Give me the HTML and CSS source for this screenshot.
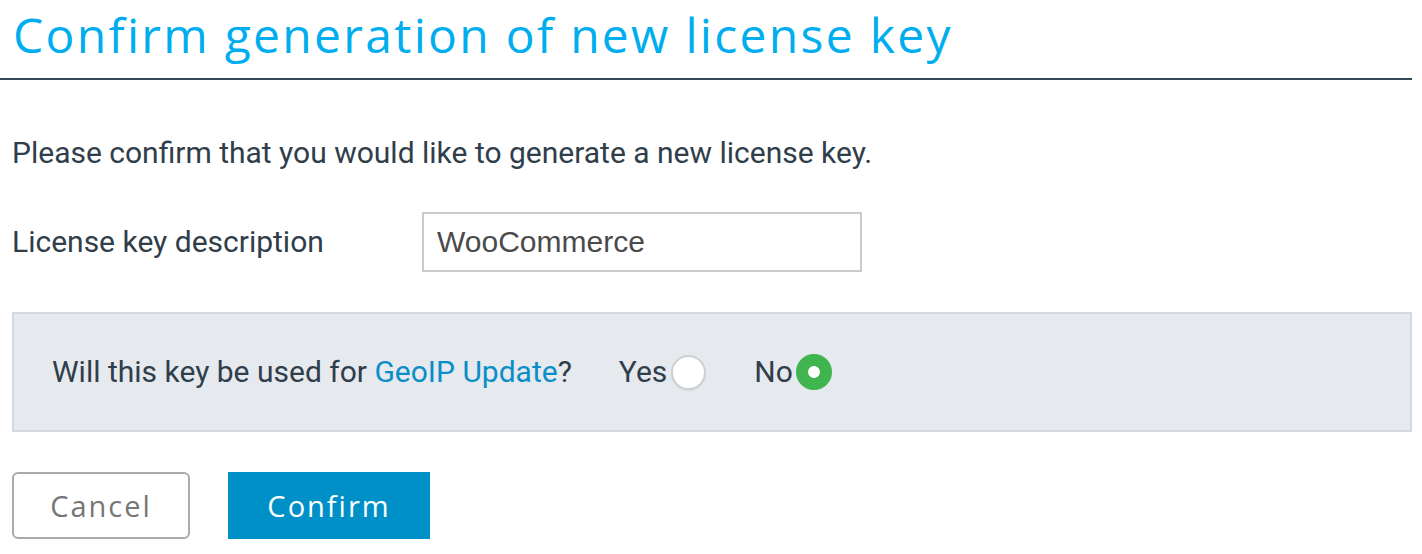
FILE: index.html
```html
<!DOCTYPE html>
<html lang="en">
<head>
<meta charset="utf-8">
<title>Confirm generation of new license key</title>
<link rel="stylesheet" href="styles.css">
</head>
<body>
<div class="page">
  <h1 class="title">Confirm generation of new license key</h1>
  <p class="intro">Please confirm that you would like to generate a new license key.</p>
  <div class="field-row">
    <label class="field-label" for="desc">License key description</label>
    <input class="field-input" id="desc" type="text" value="WooCommerce">
  </div>
  <div class="geoip-panel">
    <span class="question">Will this key be used for <a class="link" href="#">GeoIP Update</a>?</span>
    <label class="choice">Yes<span class="radio"></span></label>
    <label class="choice">No<span class="radio checked"></span></label>
  </div>
  <div class="actions">
    <button class="btn btn-cancel" type="button">Cancel</button>
    <button class="btn btn-confirm" type="button">Confirm</button>
  </div>
</div>
</body>
</html>
```

FILE: styles.css
```css
html, body {
  margin: 0;
  padding: 0;
  background: #ffffff;
}

.page {
  width: 1400px;
  padding-left: 12px;
  font-family: Roboto, "Liberation Sans", sans-serif;
  color: #2f3e4a;
}

.title {
  margin: 0 0 0 -12px;
  padding: 0 0 8px 13px;
  width: 1399px;
  height: 70px;
  line-height: 70px;
  font-family: "Open Sans", "DejaVu Sans", sans-serif;
  font-weight: 400;
  font-size: 48px;
  letter-spacing: 2.3px;
  color: #00aeef;
  border-bottom: 2px solid #334a58;
}

.intro {
  margin: 55px 0 0 0;
  font-size: 30px;
  line-height: 36px;
}

.field-row {
  display: flex;
  align-items: center;
  margin-top: 41px;
}

.field-label {
  width: 410px;
  font-size: 30px;
  line-height: 36px;
}

.field-input {
  box-sizing: border-box;
  width: 440px;
  height: 60px;
  margin: 0;
  border: 2px solid #cbcbcb;
  padding: 0 13px;
  font-family: "Liberation Sans", Arial, sans-serif;
  font-size: 30px;
  color: #4a4a4a;
  background: #ffffff;
  outline: none;
}

.geoip-panel {
  box-sizing: border-box;
  display: flex;
  align-items: center;
  width: 1400px;
  height: 120px;
  margin-top: 40px;
  padding-left: 38px;
  background: #e6e9ee;
  border: 2px solid #d3d9e1;
  font-size: 30px;
}

.question {
  line-height: 36px;
}

.link {
  color: #0a8ec8;
  text-decoration: none;
}

.choice {
  display: flex;
  align-items: center;
  line-height: 36px;
}

.question + .choice {
  margin-left: 47px;
}

.choice + .choice {
  margin-left: 48px;
}

.radio {
  box-sizing: border-box;
  display: inline-block;
  width: 35px;
  height: 35px;
  margin-left: 4px;
  border-radius: 50%;
  background: #ffffff;
  border: 2px solid #cdd0d4;
  box-shadow: 0 1px 1px rgba(0, 0, 0, 0.08);
}

.radio.checked {
  width: 36px;
  height: 36px;
  margin-left: 3px;
  border: 12px solid #3fb44f;
  background: #ffffff;
  box-shadow: none;
}

.actions {
  display: flex;
  gap: 38px;
  margin-top: 40px;
}

.btn {
  box-sizing: border-box;
  height: 67px;
  margin: 0;
  padding: 0;
  font-family: "Open Sans", "DejaVu Sans", sans-serif;
  font-size: 29px;
  letter-spacing: 2px;
  cursor: pointer;
}

.btn-cancel {
  width: 178px;
  background: #ffffff;
  border: 2px solid #a9abae;
  border-radius: 6px;
  color: #767676;
}

.btn-confirm {
  width: 202px;
  background: #0090c8;
  border: none;
  color: #ffffff;
}
```
